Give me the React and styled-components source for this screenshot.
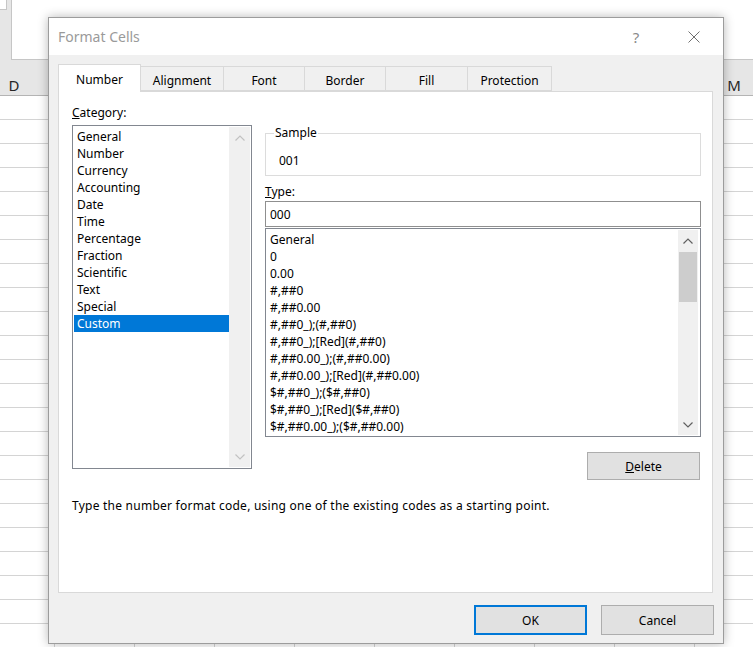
import React from 'react';
import styled, { createGlobalStyle } from 'styled-components';

const Global = createGlobalStyle`
  html, body { margin: 0; padding: 0; }
  body {
    width: 753px; height: 647px; overflow: hidden;
    font-family: "Noto Sans", "Segoe UI", sans-serif;
    -webkit-font-smoothing: antialiased;
  }
  #root { width: 753px; height: 647px; }
`;

const Screen = styled.div`
  position: relative;
  width: 753px;
  height: 647px;
  overflow: hidden;
  background: #ffffff;
  display: flex;
  flex-direction: column;
`;

const TopArea = styled.div`
  height: 60px;
  flex: none;
  display: flex;
  background: #e6e6e6;
`;

const NameBox = styled.div`
  width: 7px;
  height: 10px;
  box-sizing: border-box;
  background: #ffffff;
  border-right: 1px solid #c6c6c6;
  border-bottom: 1px solid #c6c6c6;
`;

const FormulaBox = styled.div`
  flex: 1;
  margin-left: 4px;
  box-sizing: border-box;
  background: #ffffff;
  border-left: 1px solid #c6c6c6;
  border-bottom: 1px solid #c6c6c6;
  padding-left: 13px;
  overflow: hidden;
`;

const FormulaText = styled.div`
  font-family: "Liberation Serif", serif;
  font-size: 20px;
  line-height: 20px;
  margin-top: -17px;
  color: #333;
`;

const HeaderRow = styled.div`
  height: 36px;
  flex: none;
  box-sizing: border-box;
  background: #e6e6e6;
  border-bottom: 1px solid #b4b4b4;
  display: flex;
  margin-left: -26px;
`;

const ColHead = styled.div`
  width: 80px;
  flex: none;
  display: flex;
  align-items: flex-end;
  justify-content: center;
  font-size: 15px;
  line-height: 20px;
  color: #262626;
`;

const Sheet = styled.div`
  flex: 1;
  background-color: #ffffff;
  background-image:
    repeating-linear-gradient(to bottom, transparent 0 23px, #d4d4d4 23px 24px),
    repeating-linear-gradient(to right, transparent 0 79px, #d4d4d4 79px 80px);
  background-position: 0 0, -25px 0;
`;

const Dialog = styled.div`
  position: absolute;
  left: 48px;
  top: 17px;
  width: 676px;
  height: 627px;
  box-sizing: border-box;
  border: 1px solid #9c9c9c;
  box-shadow: 0 0 10px rgba(0, 0, 0, 0.28);
  display: flex;
  flex-direction: column;
  background: #f0f0f0;
  font-size: 12px;
  color: #000;
`;

const TitleBar = styled.div`
  height: 37px;
  flex: none;
  background: #ffffff;
  display: flex;
  align-items: center;
  padding: 0 23px 0 9px;
`;

const Title = styled.div`
  font-size: 14px;
  color: #9a9a9a;
`;

const Help = styled.div`
  margin-left: auto;
  font-size: 15px;
  color: #8a8a8a;
  width: 12px;
  text-align: center;
`;

const CloseIcon = styled.svg`
  margin-left: 46px;
  width: 12px;
  height: 12px;
  display: block;
`;

const Body = styled.div`
  flex: 1;
  display: flex;
  flex-direction: column;
  padding: 9px 10px 0 9px;
`;

const TabRow = styled.div`
  display: flex;
  align-items: flex-end;
  height: 27px;
  position: relative;
  z-index: 1;
`;

const Tab = styled.div`
  width: ${p => p.$w}px;
  height: ${p => (p.$active ? 28 : 25)}px;
  margin-bottom: ${p => (p.$active ? -1 : 0)}px;
  box-sizing: border-box;
  border: 1px solid #d9d9d9;
  border-left: ${p => (p.$first ? '1px solid #d9d9d9' : 'none')};
  border-bottom: ${p => (p.$active ? 'none' : '1px solid #d9d9d9')};
  background: ${p => (p.$active ? '#ffffff' : '#f0f0f0')};
  position: relative;
  z-index: ${p => (p.$active ? 2 : 1)};
  display: flex;
  align-items: center;
  justify-content: center;
  padding-top: ${p => (p.$active ? 2 : 3)}px;
  font-size: 12px;
  color: #000;
`;

const Panel = styled.div`
  height: 502px;
  flex: none;
  box-sizing: border-box;
  background: #ffffff;
  border: 1px solid #d9d9d9;
  padding: 13px 11px 0 13px;
  display: flex;
  flex-direction: column;
`;

const Columns = styled.div`
  display: flex;
  align-items: flex-start;
  gap: 13px;
`;

const LeftCol = styled.div`
  width: 180px;
  display: flex;
  flex-direction: column;
`;

const RightCol = styled.div`
  width: 436px;
  margin-top: 20px;
  display: flex;
  flex-direction: column;
`;

const Label = styled.div`
  line-height: 16px;
  margin-bottom: 4px;
`;

const Key = styled.span`
  text-decoration: underline;
  text-underline-offset: 1px;
`;

const ListBox = styled.div`
  height: ${p => p.$h}px;
  box-sizing: border-box;
  border: 1px solid #828790;
  padding: 1px;
  display: flex;
  background: #ffffff;
`;

const Items = styled.div`
  flex: 1;
  padding-top: ${p => p.$pt}px;
  overflow: hidden;
`;

const Item = styled.div`
  height: 17px;
  line-height: 17px;
  padding-left: ${p => p.$pl}px;
  white-space: nowrap;
  background: ${p => (p.$selected ? '#0078d7' : 'transparent')};
  color: ${p => (p.$selected ? '#ffffff' : '#000000')};
`;

const ScrollBar = styled.div`
  width: ${p => p.$w}px;
  flex: none;
  background: #f0f0f0;
  display: flex;
  flex-direction: column;
  margin-right: ${p => p.$mr}px;
`;

const ArrowBtn = styled.div`
  height: 21px;
  flex: none;
  display: flex;
  align-items: center;
  justify-content: center;
`;

const Track = styled.div`
  flex: 1;
`;

const Thumb = styled.div`
  height: 50px;
  margin: 1px 1px 0 1px;
  background: #cdcdcd;
`;

const Fieldset = styled.fieldset`
  margin: 0;
  padding: 0 8px 6px 13px;
  border: 1px solid #dcdcdc;
  min-width: 0;
`;

const Legend = styled.legend`
  padding: 0 1px;
  margin-left: -5px;
  line-height: 16px;
`;

const SampleValue = styled.div`
  line-height: 17px;
  margin-top: 11px;
`;

const TypeLabel = styled(Label)`
  margin-top: 8px;
  margin-bottom: 1px;
`;

const TypeInput = styled.div`
  height: 26px;
  box-sizing: border-box;
  border: 1px solid #8f8f8f;
  padding-left: 4px;
  display: flex;
  align-items: center;
  margin-bottom: 1px;
`;

const Button = styled.div`
  width: 113px;
  height: ${p => p.$h}px;
  box-sizing: border-box;
  background: #e1e1e1;
  border: ${p => (p.$primary ? '2px solid #0078d7' : '1px solid #adadad')};
  display: flex;
  align-items: center;
  justify-content: center;
  font-size: 12px;
  color: #000;
`;

const DeleteButton = styled(Button)`
  align-self: flex-end;
  margin-top: 15px;
  margin-right: 1px;
`;

const Description = styled.div`
  margin-top: 18px;
  line-height: 16px;
  letter-spacing: 0.24px;
`;

const Footer = styled.div`
  display: flex;
  justify-content: flex-end;
  gap: 14px;
  padding: 12px 0 0 0;
  margin-right: -1px;
`;

const Chevron = ({ up, color }) => (
  <svg width="10" height="6" viewBox="0 0 10 6" style={{ display: 'block' }}>
    <polyline
      points={up ? '0.5,5.5 5,1 9.5,5.5' : '0.5,0.5 5,5 9.5,0.5'}
      fill="none"
      stroke={color}
      strokeWidth="1.2"
    />
  </svg>
);

const categories = [
  'General', 'Number', 'Currency', 'Accounting', 'Date', 'Time',
  'Percentage', 'Fraction', 'Scientific', 'Text', 'Special', 'Custom',
];

const formats = [
  'General',
  '0',
  '0.00',
  '#,##0',
  '#,##0.00',
  '#,##0_);(#,##0)',
  '#,##0_);[Red](#,##0)',
  '#,##0.00_);(#,##0.00)',
  '#,##0.00_);[Red](#,##0.00)',
  '$#,##0_);($#,##0)',
  '$#,##0_);[Red]($#,##0)',
  '$#,##0.00_);($#,##0.00)',
];

const tabs = [
  { label: 'Number', w: 83 },
  { label: 'Alignment', w: 83 },
  { label: 'Font', w: 81 },
  { label: 'Border', w: 81 },
  { label: 'Fill', w: 82 },
  { label: 'Protection', w: 84 },
];

const cols = ['D', 'E', 'F', 'G', 'H', 'I', 'J', 'K', 'L', 'M'];

export default function App() {
  return (
    <Screen>
      <Global />
      <TopArea>
        <NameBox />
        <FormulaBox>
          <FormulaText>1</FormulaText>
        </FormulaBox>
      </TopArea>
      <HeaderRow>
        {cols.map(c => (
          <ColHead key={c}>{c}</ColHead>
        ))}
      </HeaderRow>
      <Sheet />

      <Dialog>
        <TitleBar>
          <Title>Format Cells</Title>
          <Help>?</Help>
          <CloseIcon viewBox="0 0 12 12">
            <line x1="0.5" y1="0.5" x2="11.5" y2="11.5" stroke="#707070" strokeWidth="1" />
            <line x1="11.5" y1="0.5" x2="0.5" y2="11.5" stroke="#707070" strokeWidth="1" />
          </CloseIcon>
        </TitleBar>
        <Body>
          <TabRow>
            {tabs.map((t, i) => (
              <Tab key={t.label} $w={t.w} $first={i === 0} $active={i === 0}>
                {t.label}
              </Tab>
            ))}
          </TabRow>
          <Panel>
            <Columns>
              <LeftCol>
                <Label>
                  <Key>C</Key>ategory:
                </Label>
                <ListBox $h={344}>
                  <Items $pt={1}>
                    {categories.map(c => (
                      <Item key={c} $pl={3} $selected={c === 'Custom'}>
                        {c}
                      </Item>
                    ))}
                  </Items>
                  <ScrollBar $w={21} $mr={0}>
                    <ArrowBtn>
                      <Chevron up color="#c2c2c2" />
                    </ArrowBtn>
                    <Track />
                    <ArrowBtn>
                      <Chevron color="#c2c2c2" />
                    </ArrowBtn>
                  </ScrollBar>
                </ListBox>
              </LeftCol>
              <RightCol>
                <Fieldset>
                  <Legend>Sample</Legend>
                  <SampleValue>001</SampleValue>
                </Fieldset>
                <TypeLabel>
                  <Key>T</Key>ype:
                </TypeLabel>
                <TypeInput>000</TypeInput>
                <ListBox $h={209}>
                  <Items $pt={1}>
                    {formats.map(f => (
                      <Item key={f} $pl={3}>
                        {f}
                      </Item>
                    ))}
                  </Items>
                  <ScrollBar $w={20} $mr={1}>
                    <ArrowBtn>
                      <Chevron up color="#606060" />
                    </ArrowBtn>
                    <Track>
                      <Thumb />
                    </Track>
                    <ArrowBtn>
                      <Chevron color="#606060" />
                    </ArrowBtn>
                  </ScrollBar>
                </ListBox>
                <DeleteButton $h={28}>
                  <span>
                    <Key>D</Key>elete
                  </span>
                </DeleteButton>
              </RightCol>
            </Columns>
            <Description>
              Type the number format code, using one of the existing codes as a starting point.
            </Description>
          </Panel>
          <Footer>
            <Button $h={30} $primary>OK</Button>
            <Button $h={30}>Cancel</Button>
          </Footer>
        </Body>
      </Dialog>
    </Screen>
  );
}
